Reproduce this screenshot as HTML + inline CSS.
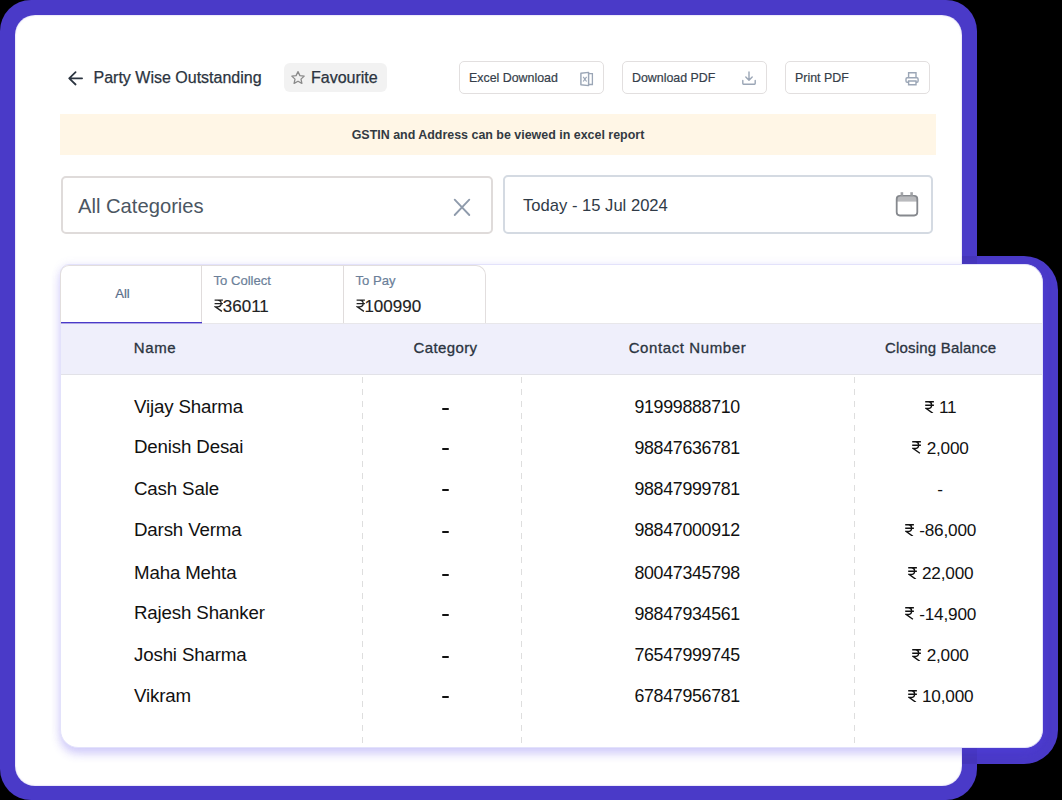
<!DOCTYPE html>
<html><head><meta charset="utf-8"><style>
html,body{margin:0;padding:0;}
body{width:1062px;height:800px;overflow:hidden;background:#000;position:relative;font-family:"Liberation Sans", sans-serif;}
.t{position:absolute;white-space:nowrap;line-height:1;}
svg{display:block}
</style></head><body>
<div style="position:absolute;left:0px;top:0px;width:977px;height:800px;background:#4a3ac8;border-radius:31px;"></div>
<div style="position:absolute;left:900px;top:256px;width:158px;height:508px;background:#4a3ac8;border-radius:34px;"></div>
<div style="position:absolute;left:962px;top:256px;width:15px;height:508px;background:#4535bb;"></div>
<div style="position:absolute;left:15px;top:15px;width:947px;height:771px;background:#fff;border-radius:20px;box-shadow:inset 0 0 1.5px rgba(74,58,200,0.55);"></div>
<svg style="position:absolute;left:66px;top:70px" width="19" height="18" viewBox="0 0 19 18" fill="none"><path d="M16.1 8.35H3.2M9.6 2.2L3.2 8.35L9.6 14.5" stroke="#2b3440" stroke-width="1.75" stroke-linecap="round" stroke-linejoin="round"/></svg>
<div class="t" style="left:93.50px;top:69.76px;font-size:16px;color:#2b3440;font-weight:400;-webkit-text-stroke:0.25px #2b3440;">Party Wise Outstanding</div>
<div style="position:absolute;left:284px;top:63px;width:103px;height:29px;background:#f2f2f2;border-radius:6px;"></div>
<svg style="position:absolute;left:290px;top:70px" width="16" height="16" viewBox="0 0 16 16" fill="none"><path d="M8 1.6L9.9 5.6L14.2 6.1L11 9.1L11.9 13.4L8 11.2L4.1 13.4L5 9.1L1.8 6.1L6.1 5.6Z" stroke="#8a8a8a" stroke-width="1.3" stroke-linejoin="round"/></svg>
<div class="t" style="left:311.00px;top:69.96px;font-size:16px;color:#2b3440;font-weight:400;-webkit-text-stroke:0.25px #2b3440;">Favourite</div>
<div style="position:absolute;left:459px;top:61px;width:145px;height:33px;box-sizing:border-box;border:1px solid #e2dfdf;border-radius:5px;background:#fff;"></div>
<div class="t" style="left:469.00px;top:72.40px;font-size:12.4px;color:#353e4a;font-weight:400;-webkit-text-stroke:0.2px #353e4a;">Excel Download</div>
<div style="position:absolute;left:622px;top:61px;width:145px;height:33px;box-sizing:border-box;border:1px solid #e2dfdf;border-radius:5px;background:#fff;"></div>
<div class="t" style="left:632.00px;top:72.40px;font-size:12.4px;color:#353e4a;font-weight:400;-webkit-text-stroke:0.2px #353e4a;">Download PDF</div>
<div style="position:absolute;left:785px;top:61px;width:145px;height:33px;box-sizing:border-box;border:1px solid #e2dfdf;border-radius:5px;background:#fff;"></div>
<div class="t" style="left:795.00px;top:72.40px;font-size:12.4px;color:#353e4a;font-weight:400;-webkit-text-stroke:0.2px #353e4a;">Print PDF</div>
<svg style="position:absolute;left:579px;top:71px" width="15" height="16" viewBox="0 0 15 16" fill="none"><path d="M1.9 2.2L9.6 1.4V14.6L1.9 13.8Z" stroke="#9ba6b6" stroke-width="1.45" stroke-linejoin="round"/><path d="M9.6 2.6H13.4V13.5H9.6" stroke="#9ba6b6" stroke-width="1.3"/><path d="M4.2 5.8L7.6 10.5M7.6 5.8L4.2 10.5" stroke="#9ba6b6" stroke-width="1.2"/></svg>
<svg style="position:absolute;left:741.4px;top:70.4px" width="16" height="16" viewBox="0 0 16 16" fill="none"><path d="M8 2V10M4.8 7L8 10.2L11.2 7" stroke="#9ba6b6" stroke-width="1.4" stroke-linecap="round" stroke-linejoin="round"/><path d="M1.8 10.5V13.6C1.8 14 2.1 14.3 2.5 14.3H13.5C13.9 14.3 14.2 14 14.2 13.6V10.5" stroke="#9ba6b6" stroke-width="1.4" stroke-linecap="round"/></svg>
<svg style="position:absolute;left:904px;top:71px" width="16" height="16" viewBox="0 0 16 16" fill="none"><path d="M4.6 6.7V1.7H12V6.7" stroke="#9ba6b6" stroke-width="1.4"/><path d="M4.6 11.2H3.2C2.5 11.2 2 10.7 2 10V7.9C2 7.2 2.5 6.7 3.2 6.7H12.9C13.6 6.7 14.1 7.2 14.1 7.9V10C14.1 10.7 13.6 11.2 12.9 11.2H12" stroke="#9ba6b6" stroke-width="1.4"/><path d="M4.6 10H12V13.8H4.6Z" stroke="#9ba6b6" stroke-width="1.4"/></svg>
<div style="position:absolute;left:60px;top:114px;width:876px;height:41px;background:#fff6e6;"></div>
<div class="t" style="left:198.00px;width:600px;text-align:center;top:129.26px;font-size:12.45px;color:#333a42;font-weight:700;">GSTIN and Address can be viewed in excel report</div>
<div style="position:absolute;left:61px;top:176px;width:432px;height:58px;box-sizing:border-box;border:2px solid #dfdbda;border-radius:5px;background:#fff;"></div>
<div class="t" style="left:78.00px;top:196.40px;font-size:20.2px;color:#4b5662;font-weight:400;">All Categories</div>
<svg style="position:absolute;left:452px;top:197px" width="20" height="20" viewBox="0 0 20 20" fill="none"><path d="M2.7 2.7L17.3 18M17.3 2.7L2.7 18" stroke="#8f9bac" stroke-width="1.85" stroke-linecap="round"/></svg>
<div style="position:absolute;left:503px;top:175px;width:430px;height:59px;box-sizing:border-box;border:2px solid #d4dae2;border-radius:5px;background:#fff;"></div>
<div class="t" style="left:523.00px;top:198.05px;font-size:16.6px;color:#303b47;font-weight:400;">Today - 15 Jul 2024</div>
<svg style="position:absolute;left:893px;top:190px" width="28" height="28" viewBox="0 0 28 28" fill="none"><rect x="3.7" y="7" width="20.6" height="4.6" fill="#b9babd"/><rect x="3.7" y="5.9" width="20.6" height="19.6" rx="3.2" stroke="#86898e" stroke-width="1.8"/><rect x="7.6" y="2.2" width="2.6" height="3.4" fill="#a2a4a8"/><rect x="17.3" y="2.2" width="2.6" height="3.4" fill="#a2a4a8"/></svg>
<div style="position:absolute;left:60px;top:264px;width:983px;height:484px;box-sizing:border-box;background:#fff;border:1.5px solid #e3e2fb;border-radius:9px 18px 18px 18px;box-shadow:0 6px 10px rgba(84,64,235,0.24),0 0 10px rgba(120,110,240,0.10);"></div>
<div style="position:absolute;left:60px;top:265px;width:426px;height:59px;box-sizing:border-box;border:1px solid #e2dede;border-bottom:none;border-radius:9px 10px 0 0;"></div>
<div style="position:absolute;left:201px;top:266px;width:1px;height:57px;background:#e0dcdc;"></div>
<div style="position:absolute;left:343px;top:266px;width:1px;height:57px;background:#e0dcdc;"></div>
<div style="position:absolute;left:61px;top:322px;width:141px;height:1px;background:#4a3ac8;"></div>
<div style="position:absolute;left:61px;top:323px;width:141px;height:1px;background:rgba(74,58,200,0.45);"></div>
<div style="position:absolute;left:202px;top:323px;width:840px;height:1px;background:#e8e7ea;"></div>
<div class="t" style="left:-177.50px;width:600px;text-align:center;top:287.11px;font-size:13.1px;color:#5a6e8a;font-weight:400;-webkit-text-stroke:0.2px #5a6e8a;">All</div>
<div class="t" style="left:213.50px;top:273.71px;font-size:13.1px;color:#6b8099;font-weight:400;-webkit-text-stroke:0.2px #6b8099;">To Collect</div>
<div class="t" style="left:355.50px;top:273.71px;font-size:13.1px;color:#6b8099;font-weight:400;-webkit-text-stroke:0.2px #6b8099;">To Pay</div>
<svg style="position:absolute;left:214.0px;top:299.0px" width="9.4" height="13" viewBox="0 0 9.4 13" fill="none"><path d="M0.6 1.1H8.9M0.6 4.6H8.9M0.6 1.1H3.3C6.3 1.1 7.2 2.8 7.2 4.6C7.2 6.6 5.8 7.9 3.2 7.9H1.3L7.9 12.4" stroke="#222" stroke-width="1.35"/></svg>
<div class="t" style="left:222.80px;top:297.71px;font-size:17px;color:#222;font-weight:400;-webkit-text-stroke:0.15px #222;">36011</div>
<svg style="position:absolute;left:355.6px;top:299.0px" width="9.4" height="13" viewBox="0 0 9.4 13" fill="none"><path d="M0.6 1.1H8.9M0.6 4.6H8.9M0.6 1.1H3.3C6.3 1.1 7.2 2.8 7.2 4.6C7.2 6.6 5.8 7.9 3.2 7.9H1.3L7.9 12.4" stroke="#222" stroke-width="1.35"/></svg>
<div class="t" style="left:364.40px;top:297.71px;font-size:17px;color:#222;font-weight:400;-webkit-text-stroke:0.15px #222;">100990</div>
<div style="position:absolute;left:61px;top:324px;width:981px;height:50px;background:#efeffb;border-bottom:1px solid #e2e2e8;"></div>
<div class="t" style="left:133.80px;top:340.00px;font-size:15px;color:#2b3440;font-weight:400;letter-spacing:0.6px;-webkit-text-stroke:0.3px #2b3440;">Name</div>
<div class="t" style="left:145.50px;width:600px;text-align:center;top:340.00px;font-size:15px;color:#2b3440;font-weight:400;letter-spacing:0.4px;-webkit-text-stroke:0.3px #2b3440;">Category</div>
<div class="t" style="left:387.50px;width:600px;text-align:center;top:340.00px;font-size:15px;color:#2b3440;font-weight:400;letter-spacing:0.6px;-webkit-text-stroke:0.3px #2b3440;">Contact Number</div>
<div class="t" style="left:640.60px;width:600px;text-align:center;top:340.00px;font-size:15px;color:#2b3440;font-weight:400;letter-spacing:0.2px;-webkit-text-stroke:0.3px #2b3440;">Closing Balance</div>
<div style="position:absolute;left:362px;top:377px;width:1px;height:370px;background:repeating-linear-gradient(to bottom,#dedede 0,#dedede 6px,transparent 6px,transparent 12px);"></div>
<div style="position:absolute;left:521px;top:377px;width:1px;height:370px;background:repeating-linear-gradient(to bottom,#dedede 0,#dedede 6px,transparent 6px,transparent 12px);"></div>
<div style="position:absolute;left:854px;top:377px;width:1px;height:370px;background:repeating-linear-gradient(to bottom,#dedede 0,#dedede 6px,transparent 6px,transparent 12px);"></div>
<div class="t" style="left:134.00px;top:397.97px;font-size:18.7px;color:#111;font-weight:400;letter-spacing:-0.15px;">Vijay Sharma</div>
<div style="position:absolute;left:442px;top:408px;width:6.5px;height:2px;background:#111;border-radius:1px;"></div>
<div class="t" style="left:387.20px;width:600px;text-align:center;top:399.23px;font-size:17.8px;color:#111;font-weight:400;letter-spacing:-0.3px;">91999888710</div>
<div class="t" style="left:640.6px;width:600px;text-align:center;top:399.14px;font-size:17.2px;color:#111;letter-spacing:-0.2px"><svg width="9" height="12.5" viewBox="0 0 9 12.5" style="display:inline-block;vertical-align:0;margin-right:5.2px" fill="none"><path d="M0.2 0.8H8.9M0.2 4.3H8.9M0.5 0.8H3.2C5.9 0.8 6.6 2.5 6.6 4.2C6.6 6.3 5.2 7.5 2.6 7.5H1.3L7.9 12.3" stroke="#111" stroke-width="1.4"/></svg>11</div>
<div class="t" style="left:134.00px;top:438.47px;font-size:18.7px;color:#111;font-weight:400;letter-spacing:-0.15px;">Denish Desai</div>
<div style="position:absolute;left:442px;top:448px;width:6.5px;height:2px;background:#111;border-radius:1px;"></div>
<div class="t" style="left:387.20px;width:600px;text-align:center;top:439.73px;font-size:17.8px;color:#111;font-weight:400;letter-spacing:-0.3px;">98847636781</div>
<div class="t" style="left:640.6px;width:600px;text-align:center;top:439.64px;font-size:17.2px;color:#111;letter-spacing:-0.2px"><svg width="9" height="12.5" viewBox="0 0 9 12.5" style="display:inline-block;vertical-align:0;margin-right:5.2px" fill="none"><path d="M0.2 0.8H8.9M0.2 4.3H8.9M0.5 0.8H3.2C5.9 0.8 6.6 2.5 6.6 4.2C6.6 6.3 5.2 7.5 2.6 7.5H1.3L7.9 12.3" stroke="#111" stroke-width="1.4"/></svg>2,000</div>
<div class="t" style="left:134.00px;top:479.87px;font-size:18.7px;color:#111;font-weight:400;letter-spacing:-0.15px;">Cash Sale</div>
<div style="position:absolute;left:442px;top:489px;width:6.5px;height:2px;background:#111;border-radius:1px;"></div>
<div class="t" style="left:387.20px;width:600px;text-align:center;top:481.13px;font-size:17.8px;color:#111;font-weight:400;letter-spacing:-0.3px;">98847999781</div>
<div class="t" style="left:640.00px;width:600px;text-align:center;top:481.14px;font-size:17.2px;color:#111;font-weight:400;">-</div>
<div class="t" style="left:134.00px;top:521.07px;font-size:18.7px;color:#111;font-weight:400;letter-spacing:-0.15px;">Darsh Verma</div>
<div style="position:absolute;left:442px;top:531px;width:6.5px;height:2px;background:#111;border-radius:1px;"></div>
<div class="t" style="left:387.20px;width:600px;text-align:center;top:522.33px;font-size:17.8px;color:#111;font-weight:400;letter-spacing:-0.3px;">98847000912</div>
<div class="t" style="left:640.6px;width:600px;text-align:center;top:522.24px;font-size:17.2px;color:#111;letter-spacing:-0.2px"><svg width="9" height="12.5" viewBox="0 0 9 12.5" style="display:inline-block;vertical-align:0;margin-right:5.2px" fill="none"><path d="M0.2 0.8H8.9M0.2 4.3H8.9M0.5 0.8H3.2C5.9 0.8 6.6 2.5 6.6 4.2C6.6 6.3 5.2 7.5 2.6 7.5H1.3L7.9 12.3" stroke="#111" stroke-width="1.4"/></svg>-86,000</div>
<div class="t" style="left:134.00px;top:563.97px;font-size:18.7px;color:#111;font-weight:400;letter-spacing:-0.15px;">Maha Mehta</div>
<div style="position:absolute;left:442px;top:574px;width:6.5px;height:2px;background:#111;border-radius:1px;"></div>
<div class="t" style="left:387.20px;width:600px;text-align:center;top:565.23px;font-size:17.8px;color:#111;font-weight:400;letter-spacing:-0.3px;">80047345798</div>
<div class="t" style="left:640.6px;width:600px;text-align:center;top:565.14px;font-size:17.2px;color:#111;letter-spacing:-0.2px"><svg width="9" height="12.5" viewBox="0 0 9 12.5" style="display:inline-block;vertical-align:0;margin-right:5.2px" fill="none"><path d="M0.2 0.8H8.9M0.2 4.3H8.9M0.5 0.8H3.2C5.9 0.8 6.6 2.5 6.6 4.2C6.6 6.3 5.2 7.5 2.6 7.5H1.3L7.9 12.3" stroke="#111" stroke-width="1.4"/></svg>22,000</div>
<div class="t" style="left:134.00px;top:604.47px;font-size:18.7px;color:#111;font-weight:400;letter-spacing:-0.15px;">Rajesh Shanker</div>
<div style="position:absolute;left:442px;top:614px;width:6.5px;height:2px;background:#111;border-radius:1px;"></div>
<div class="t" style="left:387.20px;width:600px;text-align:center;top:605.73px;font-size:17.8px;color:#111;font-weight:400;letter-spacing:-0.3px;">98847934561</div>
<div class="t" style="left:640.6px;width:600px;text-align:center;top:605.64px;font-size:17.2px;color:#111;letter-spacing:-0.2px"><svg width="9" height="12.5" viewBox="0 0 9 12.5" style="display:inline-block;vertical-align:0;margin-right:5.2px" fill="none"><path d="M0.2 0.8H8.9M0.2 4.3H8.9M0.5 0.8H3.2C5.9 0.8 6.6 2.5 6.6 4.2C6.6 6.3 5.2 7.5 2.6 7.5H1.3L7.9 12.3" stroke="#111" stroke-width="1.4"/></svg>-14,900</div>
<div class="t" style="left:134.00px;top:646.07px;font-size:18.7px;color:#111;font-weight:400;letter-spacing:-0.15px;">Joshi Sharma</div>
<div style="position:absolute;left:442px;top:656px;width:6.5px;height:2px;background:#111;border-radius:1px;"></div>
<div class="t" style="left:387.20px;width:600px;text-align:center;top:647.33px;font-size:17.8px;color:#111;font-weight:400;letter-spacing:-0.3px;">76547999745</div>
<div class="t" style="left:640.6px;width:600px;text-align:center;top:647.24px;font-size:17.2px;color:#111;letter-spacing:-0.2px"><svg width="9" height="12.5" viewBox="0 0 9 12.5" style="display:inline-block;vertical-align:0;margin-right:5.2px" fill="none"><path d="M0.2 0.8H8.9M0.2 4.3H8.9M0.5 0.8H3.2C5.9 0.8 6.6 2.5 6.6 4.2C6.6 6.3 5.2 7.5 2.6 7.5H1.3L7.9 12.3" stroke="#111" stroke-width="1.4"/></svg>2,000</div>
<div class="t" style="left:134.00px;top:686.97px;font-size:18.7px;color:#111;font-weight:400;letter-spacing:-0.15px;">Vikram</div>
<div style="position:absolute;left:442px;top:696px;width:6.5px;height:2px;background:#111;border-radius:1px;"></div>
<div class="t" style="left:387.20px;width:600px;text-align:center;top:688.23px;font-size:17.8px;color:#111;font-weight:400;letter-spacing:-0.3px;">67847956781</div>
<div class="t" style="left:640.6px;width:600px;text-align:center;top:688.14px;font-size:17.2px;color:#111;letter-spacing:-0.2px"><svg width="9" height="12.5" viewBox="0 0 9 12.5" style="display:inline-block;vertical-align:0;margin-right:5.2px" fill="none"><path d="M0.2 0.8H8.9M0.2 4.3H8.9M0.5 0.8H3.2C5.9 0.8 6.6 2.5 6.6 4.2C6.6 6.3 5.2 7.5 2.6 7.5H1.3L7.9 12.3" stroke="#111" stroke-width="1.4"/></svg>10,000</div>
</body></html>
